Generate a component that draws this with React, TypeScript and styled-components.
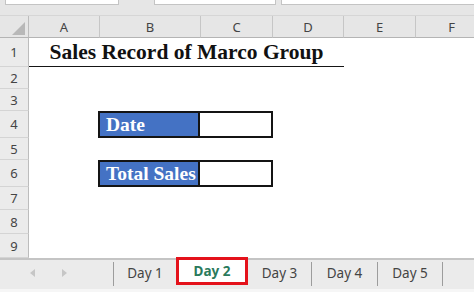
import styled, { createGlobalStyle } from "styled-components";

const GlobalStyle = createGlobalStyle`
  html, body {
    margin: 0;
    padding: 0;
    background: #fff;
  }
  body {
    width: 474px;
    height: 292px;
    overflow: hidden;
    font-family: "Noto Sans", "Open Sans", sans-serif;
  }
`;

const Page = styled.div`
  width: 474px;
  height: 292px;
  display: flex;
  flex-direction: column;
  background: #e6e6e6;
  overflow: hidden;
`;

const TopStrip = styled.div`
  height: 16px;
  flex-shrink: 0;
  display: flex;
  align-items: flex-start;
  background: #e6e6e6;
  border-bottom: 1px solid #d6d6d6;
  box-sizing: border-box;
`;

const InputBox = styled.div<{ $gap: number; $width: number }>`
  margin-left: ${(p) => p.$gap}px;
  width: ${(p) => p.$width}px;
  height: 5px;
  flex-shrink: 0;
  background: #fff;
  border: 1px solid #c4c4c4;
  border-top: none;
  box-sizing: border-box;
`;

const Sheet = styled.div`
  display: grid;
  grid-template-columns: 29px 71px 101px 72px 71px 72px 72px;
  grid-template-rows: 22px 29px 22px 22px 27px 22px 27px 23px 24px 24px;
  width: 488px;
  flex-shrink: 0;
  background: #fff;
`;

const Corner = styled.div`
  grid-row: 1;
  grid-column: 1;
  position: relative;
  background: #e6e6e6;
  border-right: 1px solid #bcbcbc;
  border-bottom: 1px solid #b4b4b4;
  box-sizing: border-box;
  display: flex;
  align-items: flex-end;
  justify-content: flex-end;
  padding: 0 3px 2px 0;
`;

const ColHead = styled.div`
  grid-row: 1;
  background: #e6e6e6;
  border-right: 1px solid #c6c6c6;
  border-bottom: 1px solid #b4b4b4;
  box-sizing: border-box;
  display: flex;
  align-items: center;
  justify-content: center;
  font-size: 13px;
  color: #444;
`;

const RowHead = styled.div<{ $row: number }>`
  grid-row: ${(p) => p.$row};
  grid-column: 1;
  background: #ebebeb;
  border-right: 1px solid #bcbcbc;
  border-bottom: 1px solid #d4d4d4;
  box-sizing: border-box;
  display: flex;
  align-items: center;
  justify-content: center;
  font-size: 13px;
  color: #444;
`;

const Title = styled.div`
  grid-row: 2;
  grid-column: 2 / 6;
  border-bottom: 1px solid #151515;
  font-family: "Liberation Serif", "Times New Roman", serif;
  font-weight: bold;
  font-size: 21.5px;
  line-height: 28px;
  color: #111;
  text-align: center;
  white-space: nowrap;
`;

const Field = styled.div<{ $row: number }>`
  grid-row: ${(p) => p.$row};
  grid-column: 3 / 5;
  margin-left: -2px;
  display: flex;
  border: 2px solid #141414;
  background: #fff;
`;

const FieldLabel = styled.div`
  width: 100px;
  flex-shrink: 0;
  background: #4472c4;
  border-right: 2px solid #141414;
  padding-left: 6px;
  box-sizing: border-box;
  display: flex;
  align-items: center;
  font-family: "Liberation Serif", "Times New Roman", serif;
  font-weight: bold;
  font-size: 19.5px;
  color: #fff;
  white-space: nowrap;
`;

const TabBar = styled.div`
  height: 34px;
  flex-shrink: 0;
  box-sizing: border-box;
  display: flex;
  background: #ebebeb;
  border-top: 2px solid #c4c4c4;
  border-bottom: 3px solid #f6f6f6;
`;

const Nav = styled.div`
  width: 113px;
  flex-shrink: 0;
  display: flex;
  align-items: center;
  padding: 0 0 4px 30px;
  gap: 27px;
  box-sizing: border-box;
`;

const Divider = styled.div`
  width: 1px;
  height: 24px;
  margin-top: 2px;
  flex-shrink: 0;
  background: #9c9c9c;
`;

const Tab = styled.div<{ $width: number; $active?: boolean }>`
  width: ${(p) => p.$width}px;
  flex-shrink: 0;
  box-sizing: border-box;
  display: flex;
  align-items: center;
  justify-content: center;
  font-size: 13.5px;
  color: ${(p) => (p.$active ? "#2a7a5c" : "#444")};
  font-weight: ${(p) => (p.$active ? 700 : 400)};
  padding-bottom: ${(p) => (p.$active ? 0 : 4)}px;
  ${(p) =>
    p.$active &&
    `
    background: #fff;
    border: 3px solid #e4121b;
    height: 28px;
    margin-top: -3px;
    padding-bottom: 1px;
  `}
`;

const Arrow = ({ dir }: { dir: "left" | "right" }) => (
  <svg width="5" height="8" viewBox="0 0 5 8">
    <path d={dir === "left" ? "M5 0 L0 4 L5 8 Z" : "M0 0 L5 4 L0 8 Z"} fill="#c6c6c6" />
  </svg>
);

const columns = ["A", "B", "C", "D", "E", "F"];
const rows = [1, 2, 3, 4, 5, 6, 7, 8, 9];

export default function App() {
  return (
    <Page>
      <GlobalStyle />
      <TopStrip>
        <InputBox $gap={5} $width={114} />
        <InputBox $gap={35} $width={122} />
        <InputBox $gap={5} $width={200} />
      </TopStrip>
      <Sheet>
        <Corner>
          <svg width="13" height="13" viewBox="0 0 13 13">
            <path d="M13 0 L13 13 L0 13 Z" fill="#b8b8b8" />
          </svg>
        </Corner>
        {columns.map((c) => (
          <ColHead key={c}>{c}</ColHead>
        ))}
        {rows.map((r) => (
          <RowHead key={r} $row={r + 1}>
            {r}
          </RowHead>
        ))}
        <Title>Sales Record of Marco Group</Title>
        <Field $row={5}>
          <FieldLabel>Date</FieldLabel>
        </Field>
        <Field $row={7}>
          <FieldLabel>Total Sales</FieldLabel>
        </Field>
      </Sheet>
      <TabBar>
        <Nav>
          <Arrow dir="left" />
          <Arrow dir="right" />
        </Nav>
        <Divider />
        <Tab $width={62}>Day 1</Tab>
        <Tab $width={72} $active>
          Day 2
        </Tab>
        <Tab $width={63}>Day 3</Tab>
        <Divider />
        <Tab $width={65}>Day 4</Tab>
        <Divider />
        <Tab $width={64}>Day 5</Tab>
        <Divider />
      </TabBar>
    </Page>
  );
}
